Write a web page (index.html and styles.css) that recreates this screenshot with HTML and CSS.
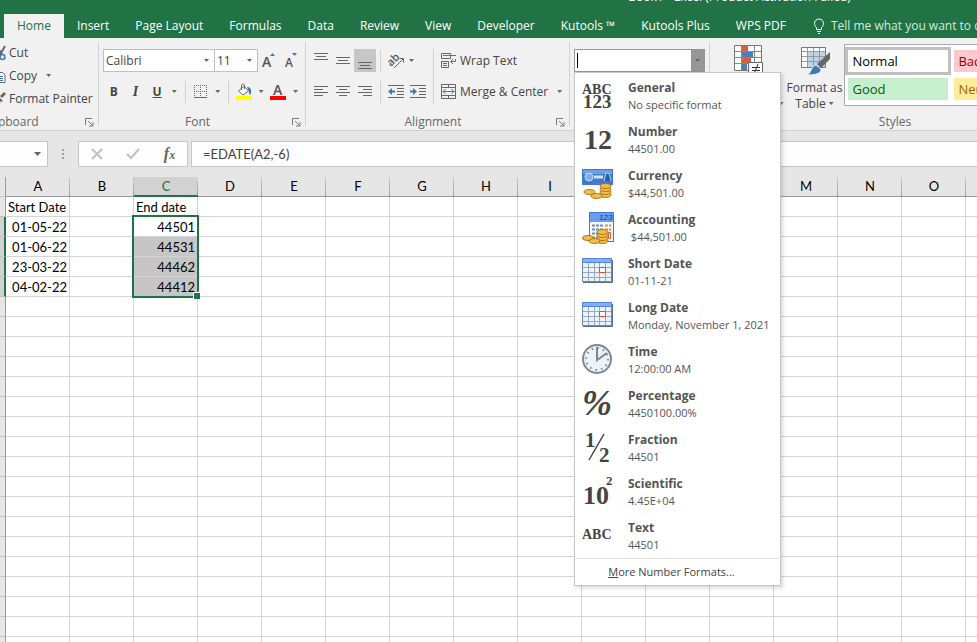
FILE: index.html
```html
<!DOCTYPE html>
<html lang="en">
<head>
    <meta charset="UTF-8">
    <meta name="viewport" content="width=device-width, initial-scale=1.0">
    <title>Book1 - Excel</title>
    <link rel="stylesheet" href="styles.css">
</head>
<body>
    <header class="titlebar">
        <h1 class="title">Book1 - Excel (Product Activation Failed)</h1>
    </header>

    <nav class="tabs">
        <button class="tab active">Home</button>
        <button class="tab">Insert</button>
        <button class="tab">Page Layout</button>
        <button class="tab">Formulas</button>
        <button class="tab">Data</button>
        <button class="tab">Review</button>
        <button class="tab">View</button>
        <button class="tab">Developer</button>
        <button class="tab">Kutools ™</button>
        <button class="tab">Kutools Plus</button>
        <button class="tab">WPS PDF</button>
        <button class="tell-me">
            <svg width="12" height="16" viewBox="0 0 12 16" fill="none" stroke="#fff"><path d="M3.5 11.500V9.500C2 8.500 1.500 7 1.500 5.500a4.500 4.500 0 0 1 9 0c0 1.500-.5 3-2 4v2zM4 13.500h4M5 15.500h2"/></svg>
            Tell me what you want to do...
        </button>
    </nav>

    <section class="ribbon">
        <div class="group clipboard">
            <div class="group-body stack">
                <button class="cmd">
                    <svg width="14" height="16" viewBox="0 0 14 16" fill="none"><path d="M5 1l5 9M13 1L8 10" stroke="#666" stroke-width="2"/><circle cx="10.500" cy="12" r="2.500" stroke="#3f78b5" stroke-width="1.500"/><circle cx="4" cy="12" r="2.500" stroke="#3f78b5" stroke-width="1.500"/></svg>
                    Cut
                </button>
                <button class="cmd">
                    <svg width="14" height="16" viewBox="0 0 14 16" fill="#fff" stroke="#666"><path d="M1.500 2.500h6v9h-6zM5.500 4.500h5l2.500 2.500v7.500H5.500z"/><path d="M7 8.500h4M7 10.500h4M7 12.500h4" stroke="#3f78b5"/></svg>
                    Copy <i class="arrow wide"></i>
                </button>
                <button class="cmd">
                    <svg width="14" height="16" viewBox="0 0 14 16"><path d="M8 5l4-4 2 2-4 4z" fill="#666"/><path d="M5 4l6 6-2 1-5-5z" fill="#666"/><path d="M4 7l5 5-4 3-4-5z" fill="#efc58b"/></svg>
                    Format Painter
                </button>
            </div>
            <div class="group-label"><span>Clipboard</span><button class="launcher" aria-label="Clipboard settings"><svg width="9" height="9" viewBox="0 0 9 9" fill="none" stroke="#777"><path d="M.5 7V.5H7M3 3l4 4M8 4v4H4"/></svg></button></div>
        </div>

        <div class="group font">
            <div class="group-body">
                <div class="row">
                    <label class="drop drop-font"><select aria-label="Font"><option>Calibri</option></select></label>
                    <label class="drop drop-size"><select aria-label="Font size"><option>11</option></select></label>
                    <button class="tool" aria-label="Increase font size"><svg width="16" height="18" viewBox="0 0 16 18"><text x="1" y="15" class="glyph" font-size="14">A</text><path d="M9 4h5l-2.500-3z" fill="#3f78b5"/></svg></button>
                    <button class="tool" aria-label="Decrease font size"><svg width="16" height="18" viewBox="0 0 16 18"><text x="2" y="15" class="glyph" font-size="12">A</text><path d="M9 1h5l-2.500 3z" fill="#3f78b5"/></svg></button>
                </div>
                <div class="row">
                    <button class="tool"><b>B</b></button>
                    <button class="tool serif"><b><i>I</i></b></button>
                    <button class="tool"><b><u>U</u></b></button>
                    <button class="more" aria-label="Underline styles"><i class="arrow"></i></button>
                    <span class="sep"></span>
                    <button class="tool" aria-label="Borders"><svg width="14" height="14" viewBox="0 0 14 14" fill="none" stroke="#666"><path d="M.5 0v13M6.500 0v13M12.500 0v13M0 .5h13M0 6.500h13" stroke-dasharray="1 1"/><path d="M0 12.500h13"/></svg></button>
                    <button class="more" aria-label="Border styles"><i class="arrow"></i></button>
                    <span class="sep"></span>
                    <button class="tool" aria-label="Fill color"><svg width="16" height="18" viewBox="0 0 16 18"><path d="M2.500 8L8 3l4.500 5L7 12z" fill="#fff" stroke="#666"/><path d="M5.500 7V2.500c0-2 3-2 3 0V6" fill="none" stroke="#666"/><path d="M11 4c4 0 5 3 3.500 8-2-1-1-4-3.500-8z" fill="#3f78b5"/><path d="M0 13h16v4H0z" fill="#ff0"/></svg></button>
                    <button class="more" aria-label="Fill colors"><i class="arrow"></i></button>
                    <button class="tool" aria-label="Font color"><svg width="16" height="18" viewBox="0 0 16 18"><text x="3" y="12" class="glyph" font-size="14">A</text><path d="M0 13h16v4H0z" fill="red"/></svg></button>
                    <button class="more" aria-label="Font colors"><i class="arrow"></i></button>
                </div>
            </div>
            <div class="group-label"><span>Font</span><button class="launcher" aria-label="Font settings"><svg width="9" height="9" viewBox="0 0 9 9" fill="none" stroke="#777"><path d="M.5 7V.5H7M3 3l4 4M8 4v4H4"/></svg></button></div>
        </div>

        <div class="group alignment">
            <div class="group-body columns">
                <div class="column">
                    <div class="row">
                        <button class="tool" aria-label="Top align"><svg width="14" height="18" viewBox="0 0 14 18" stroke="#666"><path d="M0 1.500h14M2 4.500h10M0 7.500h14"/></svg></button>
                        <button class="tool" aria-label="Middle align"><svg width="14" height="18" viewBox="0 0 14 18" stroke="#666"><path d="M0 5.500h14M2 8.500h10M0 11.500h14"/></svg></button>
                        <button class="tool pressed" aria-label="Bottom align"><svg width="14" height="18" viewBox="0 0 14 18" stroke="#666"><path d="M0 10.500h14M2 13.500h10M0 16.500h14"/></svg></button>
                        <span class="sep"></span>
                        <button class="tool" aria-label="Orientation"><svg width="17" height="16" viewBox="0 0 17 16"><text x="0" y="11" class="glyph" font-size="11" transform="rotate(-45 5 9)">ab</text><path d="M6 15L15 6M11.500 5.500h4v4" fill="none" stroke="#666"/></svg></button>
                        <button class="more narrow" aria-label="Orientation options"><i class="arrow"></i></button>
                    </div>
                    <div class="row">
                        <button class="tool" aria-label="Align left"><svg width="14" height="14" viewBox="0 0 14 14" stroke="#666"><path d="M0 1.500h14M0 4.500h9M0 7.500h14M0 10.500h9"/></svg></button>
                        <button class="tool" aria-label="Center"><svg width="14" height="14" viewBox="0 0 14 14" stroke="#666"><path d="M0 1.500h14M3 4.500h8M0 7.500h14M3 10.500h8"/></svg></button>
                        <button class="tool" aria-label="Align right"><svg width="14" height="14" viewBox="0 0 14 14" stroke="#666"><path d="M0 1.500h14M5 4.500h9M0 7.500h14M5 10.500h9"/></svg></button>
                        <span class="sep"></span>
                        <button class="tool" aria-label="Decrease indent"><svg width="16" height="14" viewBox="0 0 16 14"><path d="M0 .5h16M9 3.500h7M9 6.500h7M9 9.500h7M0 12.500h16" stroke="#666"/><path d="M0 6.500l4-3.500v2.500h3v2H4V10z" fill="#3f78b5"/></svg></button>
                        <button class="tool" aria-label="Increase indent"><svg width="16" height="14" viewBox="0 0 16 14"><path d="M0 .5h16M9 3.500h7M9 6.500h7M9 9.500h7M0 12.500h16" stroke="#666"/><path d="M7 6.500L3 3v2.500H0v2h3V10z" fill="#3f78b5"/></svg></button>
                    </div>
                </div>
                <span class="sep tall"></span>
                <div class="column">
                    <button class="cmd">
                        <svg width="16" height="16" viewBox="0 0 16 16" fill="none" stroke="#666"><path d="M.5.500h9v5h-9zM.5 8.500h7v6h-7zM2 10.500h4M2 12.500h4"/><path d="M2 2.500h13M14.500 6v2.500H10M12 6L9.500 8.500 12 11" stroke="#3f78b5"/></svg>
                        Wrap Text
                    </button>
                    <button class="cmd">
                        <svg width="16" height="16" viewBox="0 0 16 16" fill="none" stroke="#666"><path d="M.5.500h14v14H.5zM.5 3.500h14M.5 11.500h14M7.500.500v3M7.500 11.500v3"/><path d="M2 7.500h11M4.500 5L2 7.500 4.500 10M10.500 5L13 7.500 10.500 10" stroke="#3f78b5"/></svg>
                        Merge &amp; Center <i class="arrow wide"></i>
                    </button>
                </div>
            </div>
            <div class="group-label"><span>Alignment</span><button class="launcher" aria-label="Alignment settings"><svg width="9" height="9" viewBox="0 0 9 9" fill="none" stroke="#777"><path d="M.5 7V.5H7M3 3l4 4M8 4v4H4"/></svg></button></div>
        </div>

        <div class="group number">
            <div class="combo">
                <input type="text" class="combo-input" id="numberFormat" aria-label="Number format">
                <button class="combo-btn" aria-label="Open number formats"><i class="arrow"></i></button>
                <div class="menu">
                    <button class="menu-item">
                        <svg width="32" height="32" viewBox="0 0 32 32" class="serif-icon"><text x="0" y="14" font-size="14">ABC</text><text x="1" y="28" font-size="19">123</text></svg>
                        <span><b>General</b>No specific format</span>
                    </button>
                    <button class="menu-item">
                        <svg width="32" height="32" viewBox="0 0 32 32" class="serif-icon"><text x="2" y="25" font-size="28">12</text></svg>
                        <span><b>Number</b>44501.00</span>
                    </button>
                    <button class="menu-item">
                        <svg width="32" height="32" viewBox="0 0 32 32">
                            <path d="M0 1h31v16H0z" fill="#4179cc"/><path d="M1 2h29v4H1z" fill="#6aa0e8"/>
                            <circle cx="7" cy="9" r="4" fill="#7fb0ee" stroke="#c4dcfa"/><path d="M12 9h9" stroke="#cfe2fb" stroke-width="3"/><path d="M22 13l2-8h3l2 8" fill="#2d5ca9" stroke="#b7d3f7"/>
                            <g fill="#f2bd4a" stroke="#a87414"><ellipse cx="23.500" cy="27" rx="5.500" ry="2.500"/><ellipse cx="23.500" cy="24" rx="5.500" ry="2.500"/><ellipse cx="23.500" cy="21" rx="5.500" ry="2.500"/><ellipse cx="23.500" cy="18" rx="5.500" ry="2.500"/><ellipse cx="7.500" cy="24" rx="5.500" ry="2.500"/><ellipse cx="14.500" cy="28" rx="5.500" ry="2.500"/></g>
                        </svg>
                        <span><b>Currency</b>$44,501.00</span>
                    </button>
                    <button class="menu-item">
                        <svg width="32" height="32" viewBox="0 0 32 32">
                            <path d="M7.500.500h24v29h-24z" fill="#f4f8fe" stroke="#3f78c8"/><path d="M8 1h23v9H8z" fill="#6b9cf0"/>
                            <text x="17" y="8" font-size="8" font-family="Liberation Sans" font-style="italic" fill="#173a80">123</text>
                            <path d="M10 13.500h12M10 17.500h12M10 21.500h12M10 25.500h12" stroke="#7b8aa5" stroke-width="2" stroke-dasharray="3 1"/><path d="M23 13.500h6M23 17.500h6" stroke="#e9902c" stroke-width="2" stroke-dasharray="3 1"/><path d="M26.500 20.500h2v6h-2z" fill="#fff" stroke="#e05a2a"/>
                            <g fill="#f2bd4a" stroke="#a87414"><ellipse cx="20.500" cy="29" rx="5.500" ry="2.500"/><ellipse cx="20.500" cy="26" rx="5.500" ry="2.500"/><ellipse cx="20.500" cy="23" rx="5.500" ry="2.500"/><ellipse cx="20.500" cy="20" rx="5.500" ry="2.500"/><ellipse cx="6" cy="26" rx="5.500" ry="2.500"/><ellipse cx="12.500" cy="29" rx="5.500" ry="2.500"/></g>
                        </svg>
                        <span><b>Accounting</b>&nbsp;$44,501.00</span>
                    </button>
                    <button class="menu-item">
                        <svg width="32" height="32" viewBox="0 0 32 32"><path d="M.5 4.500h29v21H.5z" fill="#edf3fa" stroke="#7088a8"/><path d="M0 2h30v5H0z" fill="#5585de"/><path d="M1 3h28v3H1z" fill="#84adf5"/><path d="M6.500 7v18M12.500 7v18M17.500 7v18M23.500 7v18M1 11.500h28M1 16.500h28M1 21.500h28" stroke="#96a9c2"/><path d="M30.500 4v22.500H1" fill="none" stroke="#56708f"/><path d="M17.500 11.500h6v5h-6z" fill="#fff" stroke="#e2501e"/></svg>
                        <span><b>Short Date</b>01-11-21</span>
                    </button>
                    <button class="menu-item">
                        <svg width="32" height="32" viewBox="0 0 32 32"><path d="M.5 4.500h29v21H.5z" fill="#edf3fa" stroke="#7088a8"/><path d="M0 2h30v5H0z" fill="#5585de"/><path d="M1 3h28v3H1z" fill="#84adf5"/><path d="M6.500 7v18M12.500 7v18M17.500 7v18M23.500 7v18M1 11.500h28M1 16.500h28M1 21.500h28" stroke="#96a9c2"/><path d="M30.500 4v22.500H1" fill="none" stroke="#56708f"/><path d="M17.500 11.500h6v5h-6z" fill="#fff" stroke="#e2501e"/></svg>
                        <span><b>Long Date</b>Monday, November 1, 2021</span>
                    </button>
                    <button class="menu-item">
                        <svg width="32" height="32" viewBox="0 0 32 32" fill="none"><circle cx="15" cy="15" r="14" fill="#edf2f7" stroke="#7f868e" stroke-width="2"/><circle cx="15" cy="15" r="11" stroke="#788798" stroke-width="2" stroke-dasharray="1.500 4.260"/><path d="M15 3v13l10-7" stroke="#7d8790" stroke-width="2"/></svg>
                        <span><b>Time</b>12:00:00 AM</span>
                    </button>
                    <button class="menu-item">
                        <svg width="32" height="32" viewBox="0 0 32 32" class="serif-icon"><text x="0" y="27" font-size="36" font-style="italic">%</text></svg>
                        <span><b>Percentage</b>4450100.00%</span>
                    </button>
                    <button class="menu-item">
                        <svg width="32" height="32" viewBox="0 0 32 32" class="serif-icon"><text x="3" y="15" font-size="21">1</text><text x="17" y="30" font-size="21">2</text><path d="M7 28L22 2" stroke="#444" stroke-width="1.500"/></svg>
                        <span><b>Fraction</b>44501</span>
                    </button>
                    <button class="menu-item">
                        <svg width="32" height="32" viewBox="0 0 32 32" class="serif-icon"><text x="1" y="28" font-size="26">10</text><text x="24" y="9" font-size="13">2</text></svg>
                        <span><b>Scientific</b>4.45E+04</span>
                    </button>
                    <button class="menu-item">
                        <svg width="32" height="32" viewBox="0 0 32 32" class="serif-icon"><text x="0" y="19" font-size="14">ABC</text></svg>
                        <span><b>Text</b>44501</span>
                    </button>
                    <button class="menu-more"><u>M</u>ore Number Formats...</button>
                </div>
            </div>
        </div>

        <div class="group styles">
            <div class="group-body columns">
                <button class="big">
                    <svg width="32" height="32" viewBox="0 0 32 32"><path d="M1.500.500h27v25h-27z" fill="#fff" stroke="#777"/><path d="M9 1h6v5H9zM9 13h9v5H9z" fill="#d8603c"/><path d="M9 7h11v5H9zM9 19h5v6H9z" fill="#4a7fb9"/><path d="M8.500 1v24M21.500 1v24M2 6.500h26M2 12.500h26M2 18.500h26" stroke="#888" fill="none"/><path d="M15.500 17.500h14v14h-14z" fill="#fff" stroke="#666"/><path d="M19 22.500h8M19 25.500h8M25 19l-4 10" stroke="#333"/></svg>
                    <span>Conditional<br>Formatting<i class="arrow small"></i></span>
                </button>
                <button class="big">
                    <svg width="32" height="32" viewBox="0 0 32 32"><path d="M2.500 2.500h24v20h-24z" fill="#fff" stroke="#777"/><path d="M9 7h17v15H9z" fill="#bdd3ea"/><path d="M8.500 3v19M14.500 3v19M20.500 3v19M3 6.500h23M3 11.500h23M3 16.500h23" stroke="#999"/><path d="M31 7v7l-9 9-4-4z" fill="#666"/><path d="M17 20l5 4c0 4-4 6-14 6 4-1 4-9 9-10z" fill="#3f78b5" stroke="#f1f1f1"/></svg>
                    <span>Format as<br>Table<i class="arrow small"></i></span>
                </button>
                <div class="gallery">
                    <button class="swatch normal">Normal</button>
                    <button class="swatch bad">Bad</button>
                    <button class="swatch good">Good</button>
                    <button class="swatch neutral">Neutral</button>
                </div>
            </div>
            <div class="group-label"><span>Styles</span></div>
        </div>
    </section>

    <section class="formula-bar">
        <button class="name-box" aria-label="Name box"><i class="arrow large"></i></button>
        <span class="dots"></span>
        <div class="formula-tools">
            <button aria-label="Cancel"><svg width="12" height="12" viewBox="0 0 12 12" stroke="#c0c0c0" stroke-width="2"><path d="M1 1l10 10M11 1L1 11"/></svg></button>
            <button aria-label="Enter"><svg width="14" height="12" viewBox="0 0 14 12" fill="none" stroke="#c0c0c0" stroke-width="2"><path d="M1 6l4 4 8-9"/></svg></button>
            <button class="fx" aria-label="Insert function"><i>f</i><i class="fx-small">x</i></button>
        </div>
        <input type="text" class="formula-input" value="=EDATE(A2,-6)" aria-label="Formula">
    </section>

    <main class="sheet">
        <table class="grid">
            <thead><tr id="columns"><th class="row-head corner"></th></tr></thead>
            <tbody id="rows"></tbody>
        </table>
    </main>

    <script>
        const columns = 'ABCDEFGHIJKLMNOP'.split('');
        const rowCount = 23;
        const cells = {
            A1: 'Start Date', C1: 'End date',
            A2: '01-05-22', C2: '44501',
            A3: '01-06-22', C3: '44531',
            A4: '23-03-22', C4: '44462',
            A5: '04-02-22', C5: '44412'
        };

        const headRow = document.getElementById('columns');
        columns.forEach(name => {
            const th = document.createElement('th');
            th.textContent = name;
            if (name === 'C') th.className = 'selected';
            headRow.appendChild(th);
        });

        const body = document.getElementById('rows');
        for (let r = 1; r <= rowCount; r++) {
            const tr = document.createElement('tr');
            const inRange = r >= 2 && r <= 5;
            const head = document.createElement('th');
            head.className = inRange ? 'row-head selected' : 'row-head';
            tr.appendChild(head);

            columns.forEach(name => {
                const td = document.createElement('td');
                td.textContent = cells[name + r] || '';
                if (r > 1) td.classList.add('num');
                if (name === 'C' && r > 2 && inRange) td.classList.add('shaded');
                if (name === 'C' && r === 2) {
                    // Frame that spans the four selected rows
                    td.classList.add('anchor');
                    const frame = document.createElement('div');
                    frame.className = 'selection';
                    td.appendChild(frame);
                }
                tr.appendChild(td);
            });
            body.appendChild(tr);
        }

    </script>
</body>
</html>
```
FILE: styles.css
```css
* {
    margin: 0;
    padding: 0;
    box-sizing: border-box;
}

body {
    font-family: "Open Sans", "Noto Sans", sans-serif;
    font-size: 12px;
    line-height: 16px;
    color: #444;
    background: #e6e6e6;
    height: 100vh;
    display: flex;
    flex-direction: column;
    overflow: hidden;
}

button,
input,
select {
    font: inherit;
    color: inherit;
    background: none;
    border: none;
    outline: none;
    border-radius: 0;
    white-space: nowrap;
}

svg {
    display: block;
    flex: none;
}

/* Title and tabs */

.titlebar {
    background: #217346;
    height: 14px;
    flex: none;
    overflow: hidden;
}

.title {
    font-size: 12px;
    font-weight: normal;
    color: white;
    text-align: center;
    margin-top: -11px;
    padding-left: 502px;
}

.tabs {
    display: flex;
    flex: none;
    height: 24px;
    padding-left: 4px;
    background: #217346;
    color: white;
    overflow: hidden;
}

.tab {
    padding: 0 13px;
}

.tab.active {
    background: #f1f1f1;
    color: #217346;
}

.tell-me {
    display: flex;
    align-items: center;
    gap: 6px;
    padding-left: 14px;
    color: #d6e8dd;
}

/* Ribbon */

.ribbon {
    display: flex;
    flex: none;
    height: 93px;
    background: #f1f1f1;
    border-bottom: 1px solid #d2d2d2;
}

.group {
    display: flex;
    flex-direction: column;
    justify-content: space-between;
    flex: none;
    padding: 11px 4px 0;
    position: relative;
}

.group::after {
    content: "";
    position: absolute;
    right: 0;
    top: 4px;
    bottom: 4px;
    border-right: 1px solid #d2d2d2;
}

.clipboard {
    width: 161px;
    margin-left: -62px;
    padding-top: 3px;
    padding-left: 54px;
}

.clipboard .group-label {
    margin-left: -54px;
}

.font {
    width: 207px;
}

.alignment {
    width: 264px;
}

.number {
    width: 140px;
}

.styles {
    width: 370px;
    padding-top: 6px;
}

.group-body {
    display: flex;
    flex-direction: column;
    gap: 8px;
}

.group-body.stack {
    gap: 0;
}

.group-body.columns {
    flex-direction: row;
    gap: 0;
}

.column {
    display: flex;
    flex-direction: column;
    gap: 8px;
}

.row {
    display: flex;
    align-items: center;
    height: 23px;
}

.group-label {
    display: flex;
    align-items: center;
    height: 16px;
    color: #666;
}

.group-label span {
    flex: 1;
    text-align: center;
}

.launcher {
    width: 10px;
}

.cmd {
    display: flex;
    align-items: center;
    gap: 3px;
    height: 23px;
}

.alignment .cmd {
    padding-left: 3px;
}

.tool {
    display: flex;
    align-items: center;
    justify-content: center;
    width: 22px;
    height: 23px;
}

.tool.pressed {
    background: #c6c6c6;
}

.tool.serif {
    font-family: "Liberation Serif", serif;
    font-size: 14px;
}

.more {
    display: flex;
    align-items: center;
    justify-content: center;
    width: 13px;
    height: 23px;
}

.more.narrow {
    width: 9px;
}

.glyph {
    font-family: "Open Sans", sans-serif;
    font-weight: 600;
    fill: #555;
}

.arrow {
    display: inline-block;
    flex: none;
    width: 5px;
    height: 3px;
    background: #666;
    clip-path: polygon(0 0, 100% 0, 50% 100%);
}

.arrow.wide {
    margin-left: 6px;
}

.arrow.small {
    margin: 0 0 3px 3px;
}

.arrow.large {
    width: 7px;
    height: 4px;
}

.sep {
    width: 1px;
    height: 22px;
    margin: 0 4px;
    background: #d2d2d2;
}

.sep.tall {
    height: 55px;
}

.drop {
    position: relative;
    height: 23px;
    border: 1px solid #c0c0c0;
    background: white;
}

.drop::after {
    content: "";
    position: absolute;
    right: 5px;
    top: 9px;
    width: 5px;
    height: 3px;
    background: #666;
    clip-path: polygon(0 0, 100% 0, 50% 100%);
}

.drop select {
    appearance: none;
    width: 100%;
    height: 21px;
    padding-left: 2px;
}

.drop-font {
    width: 112px;
}

.drop-size {
    width: 43px;
    border-left: none;
}

/* Number format combo and its menu */

.combo {
    position: relative;
    display: flex;
    width: 131px;
    height: 23px;
    border: 1px solid #969696;
    background: white;
}

.combo-input {
    flex: 1;
    min-width: 0;
    margin: 3px 2px;
    border-left: 1px solid black;
}

.combo-btn {
    display: flex;
    align-items: center;
    justify-content: center;
    width: 13px;
    background: #969696;
}

.menu {
    position: absolute;
    z-index: 1;
    top: 22px;
    left: -1px;
    width: 207px;
    padding-top: 1px;
    background: white;
    border: 1px solid #c6c6c6;
    box-shadow: 2px 2px 4px rgba(0, 0, 0, 0.15);
    font-size: 11px;
}

.menu-item {
    display: flex;
    align-items: center;
    gap: 14px;
    width: 100%;
    height: 44px;
    padding-left: 7px;
    line-height: 17px;
    text-align: left;
    color: #555;
}

.menu-item b {
    display: block;
    font-size: 12px;
}

.menu-more {
    display: block;
    width: calc(100% - 2px);
    height: 27px;
    margin: 0 auto;
    padding-right: 12px;
    border-top: 1px solid #e1e1e1;
}

.serif-icon text {
    font-family: "Liberation Serif", serif;
    font-weight: bold;
    fill: #444;
}

/* Styles */

.big {
    display: flex;
    flex-direction: column;
    align-items: center;
    gap: 3px;
    margin-top: 1px;
}

.big + .big {
    margin-left: 3px;
}

.gallery {
    display: grid;
    grid-template-columns: 106px 106px;
    grid-template-rows: 28px 28px;
    height: 62px;
    margin-left: 2px;
    padding: 2px 0;
    border: 1px solid #ababab;
    background: white;
    width: 220px;
}

.swatch {
    margin: 3px;
    padding-left: 4px;
    text-align: left;
    font-size: 13px;
}

.swatch.normal {
    margin: 0;
    border: 3px solid #c0c0c0;
    color: black;
}

.swatch.good {
    background: #c6efce;
    color: #006100;
}

.swatch.bad {
    background: #ffc7ce;
    color: #9c0006;
}

.swatch.neutral {
    background: #ffeb9c;
    color: #9c6500;
}

/* Formula bar */

.formula-bar {
    display: flex;
    flex: none;
    align-items: center;
    height: 46px;
}

.name-box {
    display: flex;
    align-items: center;
    justify-content: flex-end;
    width: 48px;
    height: 26px;
    padding-right: 6px;
    background: #fdfdfd;
    border: 1px solid #c6c6c6;
    border-left: none;
}

.dots {
    width: 2px;
    height: 10px;
    margin: 0 14px;
    background: repeating-linear-gradient(#a0a0a0 0 2px, transparent 2px 4px);
}

.formula-tools {
    display: flex;
    justify-content: space-around;
    width: 110px;
    height: 26px;
    margin-right: 3px;
    background: #fdfdfd;
    border: 1px solid #c6c6c6;
}

.fx {
    font-family: "Liberation Serif", serif;
    font-size: 16px;
    font-weight: bold;
    color: #666;
}

.fx-small {
    font-size: 12px;
}

.formula-input {
    flex: 1;
    min-width: 0;
    height: 26px;
    padding-left: 11px;
    background: #fdfdfd;
    border: 1px solid #c6c6c6;
    border-right: none;
    font-family: Lato, sans-serif;
    font-size: 13px;
}

/* Sheet */

.sheet {
    flex: 1;
    min-height: 0;
    overflow: hidden;
}

.grid {
    width: 1030px;
    table-layout: fixed;
    border-spacing: 0;
    font-family: Lato, sans-serif;
    font-size: 13px;
    line-height: 17px;
    color: black;
}

.grid th,
.grid td {
    height: 20px;
    white-space: nowrap;
}

.grid td {
    padding: 2px 2px 0;
    background: white;
    border-right: 1px solid #d4d4d4;
    border-bottom: 1px solid #d4d4d4;
}

.grid td.num {
    text-align: right;
}

.grid thead th {
    font-weight: normal;
    border-bottom: 1px solid #999;
    background: linear-gradient(#cfcfcf, #999) right / 1px 100% no-repeat #e6e6e6;
}

.grid thead th.selected {
    background-color: #d2d2d2;
    color: #217346;
    border-bottom: 2px solid #217346;
}

.grid .row-head {
    width: 6px;
    background: #e6e6e6;
    border-right: 1px solid #999;
    border-bottom: 1px solid #c6c6c6;
}

.grid .row-head.selected {
    background: #d2d2d2;
    border-right: 2px solid #217346;
}

.grid td.shaded {
    background: #c6c6c6;
}

.anchor {
    position: relative;
}

/* Four 20px rows plus the frame */
.selection {
    position: absolute;
    top: -2px;
    left: -2px;
    width: 67px;
    height: 83px;
    border: 2px solid #217346;
}

.selection::after {
    content: "";
    position: absolute;
    right: -3px;
    bottom: -3px;
    width: 6px;
    height: 6px;
    background: #217346;
    border-top: 1px solid white;
    border-left: 1px solid white;
}
```
